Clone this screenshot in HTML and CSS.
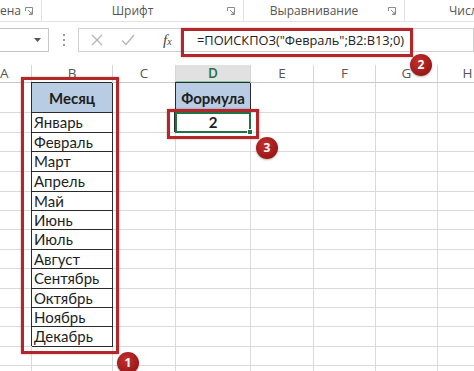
FILE: index.html
```html
<!DOCTYPE html>
<html lang="ru">
<head>
    <meta charset="UTF-8">
    <meta name="viewport" content="width=device-width, initial-scale=1.0">
    <title>ПОИСКПОЗ</title>
    <link rel="stylesheet" href="styles.css">
</head>
<body>

    <!-- Ribbon group labels -->
    <div class="ribbon">
        <div class="group group-clip">
            <span class="group-label">Буфер обмена</span>
            <svg class="launcher" width="8" height="8" viewBox="0 0 8 8"><path d="M0.5 4V0.5H7.5V7.5H4" fill="none" stroke="#8a8a8a"/><path d="M3 3L7 7M7 4.5V7H4.5" fill="none" stroke="#8a8a8a"/></svg>
        </div>
        <div class="group group-font">
            <span class="group-label">Шрифт</span>
            <svg class="launcher" width="8" height="8" viewBox="0 0 8 8"><path d="M0.5 4V0.5H7.5V7.5H4" fill="none" stroke="#8a8a8a"/><path d="M3 3L7 7M7 4.5V7H4.5" fill="none" stroke="#8a8a8a"/></svg>
        </div>
        <div class="group group-align">
            <span class="group-label">Выравнивание</span>
            <svg class="launcher" width="8" height="8" viewBox="0 0 8 8"><path d="M0.5 4V0.5H7.5V7.5H4" fill="none" stroke="#8a8a8a"/><path d="M3 3L7 7M7 4.5V7H4.5" fill="none" stroke="#8a8a8a"/></svg>
        </div>
        <div class="group group-num">
            <span class="group-label">Число</span>
        </div>
    </div>

    <!-- Formula bar -->
    <div class="formula-bar">
        <div class="name-box">
            <svg width="7" height="4" viewBox="0 0 7 4"><path d="M0 0H7L3.5 4Z" fill="#555"/></svg>
        </div>
        <div class="grip"><i></i><i></i><i></i></div>
        <div class="fx-buttons">
            <svg width="12" height="12" viewBox="0 0 12 12"><path d="M1 1L11 11M11 1L1 11" stroke="#b5b5b5" stroke-width="1.3"/></svg>
            <svg width="14" height="12" viewBox="0 0 14 12"><path d="M1 6.5L5 10.5L13 1" fill="none" stroke="#b5b5b5" stroke-width="1.3"/></svg>
            <span class="fx">f<sub>x</sub></span>
        </div>
        <div class="formula-input">=ПОИСКПОЗ("Февраль";B2:B13;0)</div>
    </div>

    <!-- Worksheet -->
    <div class="sheet">
        <div class="col-head">A</div>
        <div class="col-head">B</div>
        <div class="col-head">C</div>
        <div class="col-head active">D</div>
        <div class="col-head">E</div>
        <div class="col-head">F</div>
        <div class="col-head">G</div>
        <div class="col-head">H</div>

        <div class="cell"></div>
        <div class="cell boxed title">Месяц</div>
        <div class="cell"></div>
        <div class="cell boxed title">Формула</div>
        <div class="cell"></div><div class="cell"></div><div class="cell"></div><div class="cell"></div>

        <div class="cell"></div>
        <div class="cell boxed">Январь</div>
        <div class="cell"></div>
        <div class="cell boxed selected">2<span class="handle"></span></div>
        <div class="cell"></div><div class="cell"></div><div class="cell"></div><div class="cell"></div>

        <div class="cell"></div><div class="cell boxed">Февраль</div><div class="cell"></div><div class="cell"></div><div class="cell"></div><div class="cell"></div><div class="cell"></div><div class="cell"></div>
        <div class="cell"></div><div class="cell boxed">Март</div><div class="cell"></div><div class="cell"></div><div class="cell"></div><div class="cell"></div><div class="cell"></div><div class="cell"></div>
        <div class="cell"></div><div class="cell boxed">Апрель</div><div class="cell"></div><div class="cell"></div><div class="cell"></div><div class="cell"></div><div class="cell"></div><div class="cell"></div>
        <div class="cell"></div><div class="cell boxed">Май</div><div class="cell"></div><div class="cell"></div><div class="cell"></div><div class="cell"></div><div class="cell"></div><div class="cell"></div>
        <div class="cell"></div><div class="cell boxed">Июнь</div><div class="cell"></div><div class="cell"></div><div class="cell"></div><div class="cell"></div><div class="cell"></div><div class="cell"></div>
        <div class="cell"></div><div class="cell boxed">Июль</div><div class="cell"></div><div class="cell"></div><div class="cell"></div><div class="cell"></div><div class="cell"></div><div class="cell"></div>
        <div class="cell"></div><div class="cell boxed">Август</div><div class="cell"></div><div class="cell"></div><div class="cell"></div><div class="cell"></div><div class="cell"></div><div class="cell"></div>
        <div class="cell"></div><div class="cell boxed">Сентябрь</div><div class="cell"></div><div class="cell"></div><div class="cell"></div><div class="cell"></div><div class="cell"></div><div class="cell"></div>
        <div class="cell"></div><div class="cell boxed">Октябрь</div><div class="cell"></div><div class="cell"></div><div class="cell"></div><div class="cell"></div><div class="cell"></div><div class="cell"></div>
        <div class="cell"></div><div class="cell boxed">Ноябрь</div><div class="cell"></div><div class="cell"></div><div class="cell"></div><div class="cell"></div><div class="cell"></div><div class="cell"></div>
        <div class="cell"></div><div class="cell boxed">Декабрь</div><div class="cell"></div><div class="cell"></div><div class="cell"></div><div class="cell"></div><div class="cell"></div><div class="cell"></div>
        <div class="cell"></div><div class="cell"></div><div class="cell"></div><div class="cell"></div><div class="cell"></div><div class="cell"></div><div class="cell"></div><div class="cell"></div>
        <div class="cell"></div><div class="cell"></div><div class="cell"></div><div class="cell"></div><div class="cell"></div><div class="cell"></div><div class="cell"></div><div class="cell"></div>
    </div>

    <!-- Annotations -->
    <div class="mark mark-range"></div>
    <div class="mark mark-formula"></div>
    <div class="mark mark-result"></div>
    <span class="badge badge-1">1</span>
    <span class="badge badge-2">2</span>
    <span class="badge badge-3">3</span>

</body>
</html>
```

FILE: styles.css
```css
/* Reset */
* {
    margin: 0;
    padding: 0;
    box-sizing: border-box;
}

body {
    width: 474px;
    height: 371px;
    overflow: hidden;
    position: relative;
    background: #ffffff;
    font-family: "Open Sans", "Noto Sans", sans-serif;
    color: #222;
}

/* Ribbon group labels */
.ribbon {
    display: flex;
    height: 22px;
    border-bottom: 1px solid #e3e3e3;
}

.group {
    display: flex;
    align-items: center;
    height: 21px;
    border-right: 1px solid #e1e1e1;
    font-size: 12px;
    color: #555;
    white-space: nowrap;
    overflow: hidden;
}

.group-label {
    flex: 1;
    text-align: center;
}

.launcher {
    flex: none;
    margin: 0 8px 0 4px;
}

.group-clip {
    width: 42px;
    justify-content: flex-end;
}

.group-clip .group-label {
    flex: none;
}

.group-font {
    width: 202px;
}

.group-align {
    width: 161px;
}

.group-num {
    flex: 1;
    border-right: none;
    padding-left: 44px;
}

.group-num .group-label {
    text-align: left;
}

/* Formula bar */
.formula-bar {
    display: flex;
    align-items: center;
    height: 34px;
    padding-top: 2px;
}

.name-box {
    width: 49px;
    height: 24px;
    border: 1px solid #c6c6c6;
    border-left: none;
    display: flex;
    align-items: center;
    justify-content: flex-end;
    padding-right: 7px;
}

.grip {
    width: 29px;
    display: flex;
    flex-direction: column;
    align-items: center;
    gap: 3px;
}

.grip i {
    width: 2px;
    height: 2px;
    background: #9a9a9a;
}

.fx-buttons {
    width: 104px;
    height: 24px;
    border: 1px solid #d0d0d0;
    border-right: none;
    display: flex;
    align-items: center;
    padding-left: 12px;
    gap: 18px;
}

.fx {
    font-family: "Liberation Serif", serif;
    font-style: italic;
    font-size: 15px;
    color: #444;
    margin-left: 10px;
}

.fx sub {
    font-size: 10px;
    vertical-align: 0;
}

.formula-input {
    flex: 1;
    height: 24px;
    border: 1px solid #d0d0d0;
    padding-left: 14px;
    font-size: 12.8px;
    line-height: 22px;
    color: #222;
    white-space: nowrap;
}

/* Worksheet grid */
.sheet {
    margin-top: 9px;
    display: grid;
    grid-template-columns: 32px 81px 63px 75px 63px 62px 62px 60px;
    grid-template-rows: 18px 30px 20px 19px 20px 20px 19px 19px 20px 19px 20px 19px 19px 20px 19px 20px;
}

.col-head {
    border-right: 1px solid #d5d5d5;
    border-bottom: 1px solid #c9c9c9;
    text-align: center;
    font-size: 13.5px;
    line-height: 17px;
    color: #555;
}

.col-head:first-child {
    text-align: left;
}

.col-head.active {
    background: #e1e1e1;
    color: #217346;
    border-bottom: 2px solid #8cc3a2;
    font-weight: 600;
}

.cell {
    border-right: 1px solid #dadada;
    border-bottom: 1px solid #dadada;
    font-family: "Lato", "Open Sans", sans-serif;
    font-size: 15px;
    line-height: 19px;
    padding-left: 2px;
    white-space: nowrap;
    color: #1e1e1e;
}

/* Cells of the source range and the result, with thin black borders */
.cell.boxed {
    border-right-color: #2b2b2b;
    border-bottom-color: #2b2b2b;
    box-shadow: -1px -1px 0 #2b2b2b;
}

.cell.title {
    background: #b8cce4;
    font-weight: bold;
    text-align: center;
    line-height: 31px;
    padding-left: 0;
}

.cell.selected {
    position: relative;
    font-weight: bold;
    text-align: center;
    padding-left: 0;
    border: 2px solid #217346;
    margin: -1px 0 0 -1px;
    line-height: 17px;
}

.handle {
    position: absolute;
    right: -4px;
    bottom: -4px;
    width: 6px;
    height: 6px;
    background: #217346;
    border: 1px solid #fff;
}

/* Red annotation frames */
.mark {
    position: absolute;
    border: 3px solid #b3262a;
    box-shadow: 0 0 2px rgba(120, 0, 0, 0.35);
}

.mark-range {
    left: 21px;
    top: 77px;
    width: 98px;
    height: 277px;
}

.mark-formula {
    left: 181px;
    top: 28px;
    width: 232px;
    height: 29px;
}

.mark-result {
    left: 167px;
    top: 109px;
    width: 92px;
    height: 30px;
}

/* Numbered badges */
.badge {
    position: absolute;
    width: 22px;
    height: 22px;
    border-radius: 50%;
    background: radial-gradient(circle at 40% 35%, #c4302f, #991817 70%);
    color: #fff;
    font-family: "Open Sans", sans-serif;
    font-weight: bold;
    font-size: 12px;
    line-height: 22px;
    text-align: center;
    box-shadow: 0 1px 2px rgba(0, 0, 0, 0.3);
}

.badge-1 {
    left: 117px;
    top: 352px;
}

.badge-2 {
    left: 410px;
    top: 54px;
}

.badge-3 {
    left: 256px;
    top: 137px;
}
```
